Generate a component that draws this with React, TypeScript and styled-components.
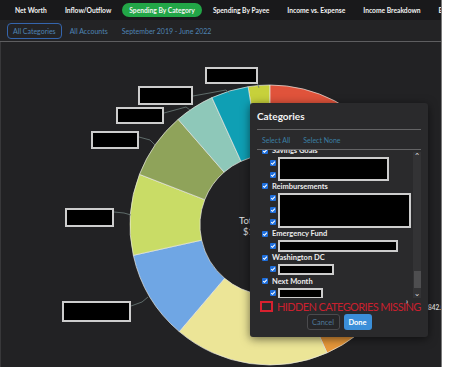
import React from 'react'
import styled, { createGlobalStyle } from 'styled-components'

const GlobalStyle = createGlobalStyle`
  html, body {
    margin: 0;
    padding: 0;
    background: #ffffff;
  }
  body {
    font-family: Lato, "Open Sans", sans-serif;
  }
`

const tabs = ['Net Worth', 'Inflow/Outflow', 'Spending By Category', 'Spending By Payee', 'Income vs. Expense', 'Income Breakdown', 'Balance Sheet']
const filters = ['All Categories', 'All Accounts', 'September 2019 - June 2022']

// chart geometry, page coordinates
const CX = 270
const CY = 225
const R_OUT = 140
const R_IN = 70

const slices = [
  { from: -9, to: 0, color: '#c7d13b' },
  { from: 0, to: 55, color: '#e0533b' },
  { from: 55, to: 95, color: '#d9607a' },
  { from: 95, to: 128, color: '#f2c04c' },
  { from: 128, to: 156, color: '#e8983a' },
  { from: 156, to: 220.4, color: '#ece597' },
  { from: 220.4, to: 257.5, color: '#6fa6e4' },
  { from: 257.5, to: 291.2, color: '#c9dc66' },
  { from: 291.2, to: 319, color: '#8fa35a' },
  { from: 319, to: 335.5, color: '#8ec8b9' },
  { from: 335.5, to: 351, color: '#0f9fb4' },
]

const labels = [
  { x: 205, y: 67, w: 53, h: 17 },
  { x: 138, y: 86, w: 55, h: 19 },
  { x: 116, y: 107, w: 48, h: 17 },
  { x: 91, y: 131, w: 48, h: 18 },
  { x: 65, y: 208, w: 49, h: 19 },
  { x: 62, y: 301, w: 69, h: 21 },
]

const leaders = [
  '257,82 259,88',
  '193,96 226,90 230,94',
  '164,113 186,107 190,110',
  '139,137 150,140 155,145',
  '114,212 124,213 131,215',
  '131,306 142,302 148,297',
]

function pt(a: number, r: number) {
  const t = (a * Math.PI) / 180
  return `${(CX + r * Math.sin(t)).toFixed(2)} ${(CY - r * Math.cos(t)).toFixed(2)}`
}

function slicePath(a0: number, a1: number) {
  const large = a1 - a0 > 180 ? 1 : 0
  return `M ${pt(a0, R_OUT)} A ${R_OUT} ${R_OUT} 0 ${large} 1 ${pt(a1, R_OUT)} L ${pt(a1, R_IN)} A ${R_IN} ${R_IN} 0 ${large} 0 ${pt(a0, R_IN)} Z`
}

type Row =
  | { kind: 'parent'; name: string }
  | { kind: 'group'; count: number; width: number }

const rows: Row[] = [
  { kind: 'parent', name: 'Savings Goals' },
  { kind: 'group', count: 2, width: 111 },
  { kind: 'parent', name: 'Reimbursements' },
  { kind: 'group', count: 3, width: 133 },
  { kind: 'parent', name: 'Emergency Fund' },
  { kind: 'group', count: 1, width: 120 },
  { kind: 'parent', name: 'Washington DC' },
  { kind: 'group', count: 1, width: 56 },
  { kind: 'parent', name: 'Next Month' },
  { kind: 'group', count: 1, width: 45 },
]

const ROW_H = 11.85

export default function App() {
  return (
    <>
      <GlobalStyle />
      <Page>
        <TopNav>
          {tabs.map((t, i) => (
            <Tab key={t} $active={i === 2}>{t}</Tab>
          ))}
        </TopNav>
        <SubNav>
          {filters.map((f, i) => (
            <Filter key={f} $active={i === 0}>{f}</Filter>
          ))}
        </SubNav>
        <ChartArea>
          <ChartSvg width={441} height={325} viewBox="0 42 441 325">
            {slices.map((s) => (
              <path key={s.from} d={slicePath(s.from, s.to)} fill={s.color} stroke="#e9e9e4" strokeWidth={0.7} />
            ))}
            {leaders.map((p) => (
              <polyline key={p} points={p} fill="none" stroke="#6f7f7c" strokeWidth={0.8} />
            ))}
            {labels.map((l) => (
              <rect key={l.x} x={l.x + 1} y={l.y + 1} width={l.w - 2} height={l.h - 2} fill="#000" stroke="#cdcdcd" strokeWidth={2} />
            ))}
            <text x={239} y={224} fill="#e2e2e2" fontSize={9.5} fontFamily="Lato, sans-serif">Total Spending</text>
            <text x={243} y={235} fill="#e2e2e2" fontSize={9.5} fontFamily="Lato, sans-serif">$12,480.00</text>
            <text x={419} y={310} fill="#d8d8d8" fontSize={6.5} fontWeight={700} fontFamily="Lato, sans-serif">$1,842.00</text>
          </ChartSvg>

          <Dialog>
            <DialogTitle>Categories</DialogTitle>
            <Divider />
            <SelectRow>
              <LinkButton>Select All</LinkButton>
              <LinkButton>Select None</LinkButton>
            </SelectRow>
            <Divider />
            <ListWindow>
              <ListInner>
                {rows.map((r, i) =>
                  r.kind === 'parent' ? (
                    <ParentRow key={i}>
                      <Check />
                      <ParentName>{r.name}</ParentName>
                    </ParentRow>
                  ) : (
                    <ChildGroup key={i} $count={r.count}>
                      <CheckColumn>
                        {Array.from({ length: r.count }).map((_, j) => (
                          <CheckCell key={j}>
                            <Check />
                          </CheckCell>
                        ))}
                      </CheckColumn>
                      <Redacted $width={r.width} />
                    </ChildGroup>
                  )
                )}
              </ListInner>
              <ScrollTrack>
                <ScrollArrow>⌃</ScrollArrow>
                <ScrollThumb />
                <ScrollArrow>⌄</ScrollArrow>
              </ScrollTrack>
            </ListWindow>
            <Annotation>
              <RedBox />
              <RedText>HIDDEN CATEGORIES MISSING</RedText>
              <StrayChevron>›</StrayChevron>
            </Annotation>
            <ButtonRow>
              <CancelButton>Cancel</CancelButton>
              <DoneButton>Done</DoneButton>
            </ButtonRow>
          </Dialog>
        </ChartArea>
      </Page>
    </>
  )
}

function Check() {
  return (
    <CheckBox>
      <svg width="6" height="6" viewBox="0 0 6 6">
        <polyline points="1.2,3.1 2.5,4.3 4.9,1.6" fill="none" stroke="#ffffff" strokeWidth={1.1} />
      </svg>
    </CheckBox>
  )
}

const Page = styled.div`
  width: 441px;
  height: 367px;
  background: #222224;
  box-shadow: inset 1px 0 #38383a, 1px 0 #7a7a7a;
  display: flex;
  flex-direction: column;
  overflow: hidden;
`

const TopNav = styled.nav`
  height: 20px;
  flex: none;
  background: #19191b;
  display: flex;
  align-items: center;
  padding-left: 6px;
  overflow: hidden;
`

const Tab = styled.div<{ $active?: boolean }>`
  flex: none;
  height: 14px;
  line-height: 14px;
  padding: 0 ${(p) => (p.$active ? 7 : 9)}px;
  margin: 0 ${(p) => (p.$active ? 2 : 0)}px;
  border-radius: 7px;
  font-size: 6.7px;
  font-weight: 700;
  color: #f2f2f2;
  white-space: nowrap;
  background: ${(p) => (p.$active ? '#22a647' : 'transparent')};
`

const SubNav = styled.div`
  height: 21px;
  flex: none;
  display: flex;
  align-items: center;
  gap: 2px;
  padding-left: 7px;
  border-bottom: 1px solid #5e5e60;
  background: #232325;
`

const Filter = styled.div<{ $active?: boolean }>`
  height: 14px;
  line-height: 14px;
  padding: 0 5px;
  border: 1px solid ${(p) => (p.$active ? '#3565ad' : 'transparent')};
  border-radius: 4px;
  font-size: 7px;
  color: #4f83b4;
  white-space: nowrap;
`

const ChartArea = styled.div`
  position: relative;
  flex: 1;
`

const ChartSvg = styled.svg`
  display: block;
`

const Dialog = styled.div`
  position: absolute;
  left: 250px;
  top: 61px;
  width: 178px;
  height: 234px;
  box-sizing: border-box;
  padding: 0 7px 7px;
  background: #2a2a2c;
  border-radius: 3px;
  box-shadow: 0 2px 10px rgba(0, 0, 0, 0.55);
  display: flex;
  flex-direction: column;
`

const DialogTitle = styled.div`
  padding-top: 7px;
  height: 12px;
  line-height: 12px;
  font-size: 10px;
  font-weight: 700;
  color: #f4f4f4;
  margin-bottom: 7px;
`

const Divider = styled.div`
  height: 1px;
  flex: none;
  background: #646466;
`

const SelectRow = styled.div`
  height: 19px;
  display: flex;
  align-items: center;
  gap: 13px;
  padding-left: 5px;
`

const LinkButton = styled.span`
  font-size: 7px;
  color: #3b7fa3;
`

const ListWindow = styled.div`
  position: relative;
  height: 148px;
  flex: none;
  overflow: hidden;
`

const ListInner = styled.div`
  margin-top: -5px;
  padding-left: 5px;
`

const ParentRow = styled.div`
  height: ${ROW_H}px;
  display: flex;
  align-items: center;
  gap: 4px;
`

const ParentName = styled.span`
  font-size: 7.5px;
  font-weight: 700;
  color: #ececec;
  white-space: nowrap;
`

const ChildGroup = styled.div<{ $count: number }>`
  height: ${(p) => p.$count * ROW_H}px;
  display: flex;
  padding-left: 8px;
`

const CheckColumn = styled.div`
  display: flex;
  flex-direction: column;
`

const CheckCell = styled.div`
  height: ${ROW_H}px;
  display: flex;
  align-items: center;
`

const CheckBox = styled.span`
  width: 6px;
  height: 6px;
  flex: none;
  border-radius: 1px;
  background: #1f6fdc;
  display: flex;
`

const Redacted = styled.div<{ $width: number }>`
  width: ${(p) => p.$width}px;
  box-sizing: border-box;
  margin: 0.5px 0 0 2px;
  height: calc(100% - 0.5px);
  background: #000;
  border: 2px solid #cdcdcd;
`

const ScrollTrack = styled.div`
  position: absolute;
  right: 0;
  top: 2px;
  bottom: 0;
  width: 8px;
  background: #333335;
  display: flex;
  flex-direction: column;
  align-items: center;
`

const ScrollArrow = styled.span`
  height: 9px;
  line-height: 9px;
  font-size: 8px;
  color: #d0d0d0;
  font-family: "DejaVu Sans", sans-serif;
`

const ScrollThumb = styled.div`
  margin-top: auto;
  margin-bottom: 1px;
  width: 7px;
  height: 17px;
  background: #4e4e50;
`

const Annotation = styled.div`
  position: relative;
  margin-top: 3px;
  height: 11px;
  display: flex;
  align-items: center;
  padding-left: 3px;
`

const RedBox = styled.div`
  width: 13px;
  height: 11px;
  box-sizing: border-box;
  border: 2px solid #d8212f;
  flex: none;
`

const RedText = styled.span`
  margin-left: 4px;
  font-size: 11px;
  line-height: 11px;
  color: #c9202e;
  white-space: nowrap;
  letter-spacing: -0.62px;
`

const StrayChevron = styled.span`
  position: absolute;
  right: 13px;
  top: -4px;
  font-size: 7px;
  font-weight: 700;
  color: #e0e0e0;
`

const ButtonRow = styled.div`
  margin-top: 2px;
  display: flex;
  justify-content: center;
  gap: 4px;
`

const CancelButton = styled.div`
  width: 33px;
  height: 16px;
  box-sizing: border-box;
  border: 1px solid #4a4a4d;
  border-radius: 3px;
  background: #262628;
  color: #4f7796;
  font-size: 7.5px;
  display: flex;
  align-items: center;
  justify-content: center;
`

const DoneButton = styled.div`
  width: 28px;
  height: 16px;
  border-radius: 3px;
  background: #3b8fd9;
  color: #ffffff;
  font-size: 7.5px;
  font-weight: 700;
  display: flex;
  align-items: center;
  justify-content: center;
`
